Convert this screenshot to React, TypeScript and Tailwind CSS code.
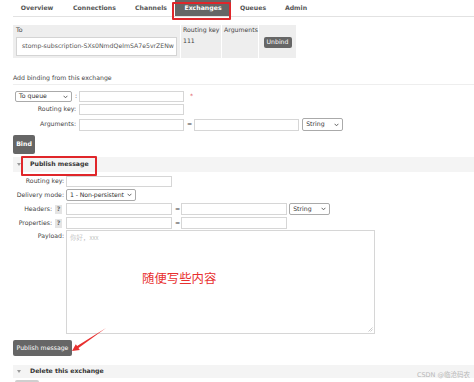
import React from 'react';

const tabs = [
  { label: 'Overview', w: 'w-[48px]' },
  { label: 'Connections', w: 'w-[67px]' },
  { label: 'Channels', w: 'w-[46px]' },
  { label: 'Exchanges', w: 'w-[56px]', active: true },
  { label: 'Queues', w: 'w-[44px]' },
  { label: 'Admin', w: 'w-[42px]' },
];

function Chevron() {
  return (
    <svg width="5" height="4" viewBox="0 0 5 4" className="shrink-0">
      <path d="M0.6 0.8 L2.5 2.8 L4.4 0.8" fill="none" stroke="#555" strokeWidth="0.9" />
    </svg>
  );
}

function Select({ label, className }: { label: string; className: string }) {
  return (
    <div
      className={`flex items-center justify-between gap-[2px] whitespace-nowrap border border-[#aaa] rounded-[2px] bg-white pl-[3px] pr-[3px] text-[#333] ${className}`}
    >
      <span>{label}</span>
      <Chevron />
    </div>
  );
}

function Field({ className }: { className: string }) {
  return <div className={`border border-[#d6d6d6] bg-white ${className}`} />;
}

function Help() {
  return (
    <span className="ml-[3px] inline-flex h-[9px] w-[7px] items-center justify-center bg-[#e4e4e4] text-[#666] font-bold">
      ?
    </span>
  );
}

function SectionBar({ title }: { title: string }) {
  return (
    <div className="ml-[13px] flex h-full items-center bg-[#f4f4f4] font-bold text-[#333]">
      <svg width="4" height="3" viewBox="0 0 4 3" className="ml-[4px] mr-[9px]">
        <path d="M0 0 H4 L2 3 Z" fill="#9a9a9a" />
      </svg>
      <span>{title}</span>
    </div>
  );
}

export default function App() {
  return (
    <div className="relative h-[382px] w-[474px] overflow-hidden bg-white font-['DejaVu_Sans',sans-serif] text-[6.2px] leading-none text-[#444]">
      {/* Tabs */}
      <div className="ml-[13px] flex h-[17px] border-b border-[#e2e2e2] font-bold text-[#555]">
        {tabs.map((t) => (
          <div
            key={t.label}
            className={`flex h-full items-center justify-center ${t.w} ${
              t.active ? 'ml-[1px] bg-[#666] text-white' : ''
            }`}
          >
            {t.label}
          </div>
        ))}
      </div>

      {/* Bindings table */}
      <div className="ml-[13px] mt-[8px] flex h-[33px] gap-px whitespace-nowrap">
        <div className="flex w-[167px] flex-col bg-[#eeeeee] px-[3px]">
          <div className="flex h-[11px] items-center">To</div>
          <div className="mt-px flex h-[19px] items-center border border-[#d4d4d4] bg-white pl-[5px] text-[#555]">
            stomp-subscription-SXs0NmdQelmSA7e5vrZENw
          </div>
        </div>
        <div className="flex w-[40px] flex-col bg-[#eeeeee] px-[2px]">
          <div className="flex h-[11px] items-center">Routing key</div>
          <div className="mt-[2px]">111</div>
        </div>
        <div className="flex w-[36px] flex-col bg-[#eeeeee] px-[2px]">
          <div className="flex h-[11px] items-center">Arguments</div>
        </div>
        <div className="flex w-[37px] flex-col items-center bg-[#eeeeee]">
          <div className="h-[12px]" />
          <div className="flex h-[11px] w-[28px] items-center justify-center rounded-[2px] bg-[#666] text-white">
            Unbind
          </div>
        </div>
      </div>

      {/* Add binding */}
      <div className="ml-[13px] mt-[15px] flex h-[12px] items-center border-b border-[#eeeeee]">
        Add binding from this exchange
      </div>

      <div className="mt-[6px] flex h-[11px] items-center">
        <div className="ml-[15px] flex w-[62px] items-center">
          <Select label="To queue" className="h-[11px] w-[57px]" />
          <span className="ml-[3px]">:</span>
        </div>
        <Field className="ml-[2px] h-[11px] w-[105px]" />
        <span className="ml-[6px] self-start pt-[2px] text-[#e05a5a]">*</span>
      </div>
      <div className="mt-[2px] flex h-[11px] items-center">
        <div className="w-[76px] text-right">Routing key:</div>
        <Field className="ml-[3px] h-[11px] w-[105px]" />
      </div>
      <div className="mt-[3px] flex h-[13px] items-center">
        <div className="w-[76px] text-right">Arguments:</div>
        <Field className="ml-[3px] h-[12px] w-[105px]" />
        <span className="ml-[3px]">=</span>
        <Field className="ml-[2px] h-[12px] w-[105px]" />
        <Select label="String" className="ml-[3px] h-[13px] w-[41px]" />
      </div>
      <div className="ml-[13px] mt-[4px] flex h-[19px] w-[22px] items-center justify-center rounded-[2px] bg-[#666] font-bold text-white">
        Bind
      </div>

      {/* Publish message */}
      <div className="mt-[3px] h-[15px]">
        <SectionBar title="Publish message" />
      </div>
      <div className="mt-[4px] flex h-[11px] items-center">
        <div className="w-[64px] text-right">Routing key:</div>
        <Field className="ml-[2px] h-[11px] w-[106px]" />
      </div>
      <div className="mt-[2px] flex h-[12px] items-center">
        <div className="w-[64px] text-right">Delivery mode:</div>
        <Select label="1 - Non-persistent" className="ml-[2px] h-[12px] w-[70px] tracking-[-0.1px]" />
      </div>
      <div className="mt-[2px] flex h-[12px] items-center">
        <div className="flex w-[64px] items-center justify-end pr-[2px]">
          Headers: <Help />
        </div>
        <Field className="ml-[2px] h-[12px] w-[106px]" />
        <span className="ml-[3px]">=</span>
        <Field className="ml-[1px] h-[12px] w-[106px]" />
        <Select label="String" className="ml-[2px] h-[12px] w-[41px]" />
      </div>
      <div className="mt-[2px] flex h-[12px] items-center">
        <div className="flex w-[64px] items-center justify-end pr-[2px]">
          Properties: <Help />
        </div>
        <Field className="ml-[2px] h-[12px] w-[106px]" />
        <span className="ml-[3px]">=</span>
        <Field className="ml-[1px] h-[12px] w-[106px]" />
      </div>
      <div className="mt-px flex">
        <div className="mt-[3px] w-[64px] text-right">Payload:</div>
        <div className="relative ml-[2px] h-[104px] w-[309px] border border-[#d6d6d6] bg-white">
          <span className="absolute left-[3px] top-[3px] font-['Noto_Sans_CJK_SC',serif] text-[6.5px] font-light text-[#a8a8a8]">
            你好，xxx
          </span>
          <span className="absolute left-[75px] top-[41px] font-['Noto_Sans_CJK_SC',sans-serif] text-[12.4px] text-[#e8302f]">
            随便写些内容
          </span>
          <svg width="5" height="5" viewBox="0 0 5 5" className="absolute bottom-px right-px">
            <path d="M4.5 0.5 L0.5 4.5 M4.5 2.5 L2.5 4.5" stroke="#aaa" strokeWidth="0.6" />
          </svg>
        </div>
      </div>
      <div className="ml-[13px] mt-[6px] flex h-[16px] w-[59px] items-center justify-center rounded-[2px] bg-[#666] text-white">
        Publish message
      </div>

      {/* Delete this exchange */}
      <div className="mt-[9px] h-[13px]">
        <SectionBar title="Delete this exchange" />
      </div>
      <div className="ml-[15px] mt-[2px] h-[10px] w-[24px] rounded-[2px] bg-[#cfcfcf]" />

      {/* Annotations */}
      <div className="pointer-events-none absolute left-[172px] top-[2px] h-[18px] w-[59px] rounded-[1px] border-2 border-[#e0262a]" />
      <div className="pointer-events-none absolute left-[21px] top-[156px] h-[20px] w-[76px] rounded-[1px] border-2 border-[#e0262a]" />
      <svg
        className="pointer-events-none absolute left-0 top-0"
        width="474"
        height="382"
        viewBox="0 0 474 382"
      >
        <polygon
          points="106,328 78.5,348.1 79.8,350 72,351 75.8,344.2 77.1,346.1"
          fill="#e8302f"
        />
      </svg>
      <div className="pointer-events-none absolute right-[4px] top-[372px] font-['DejaVu_Sans','Noto_Sans_CJK_SC',sans-serif] text-[6.5px] text-[#b8b8b8]">
        CSDN @临沧码农
      </div>
    </div>
  );
}
